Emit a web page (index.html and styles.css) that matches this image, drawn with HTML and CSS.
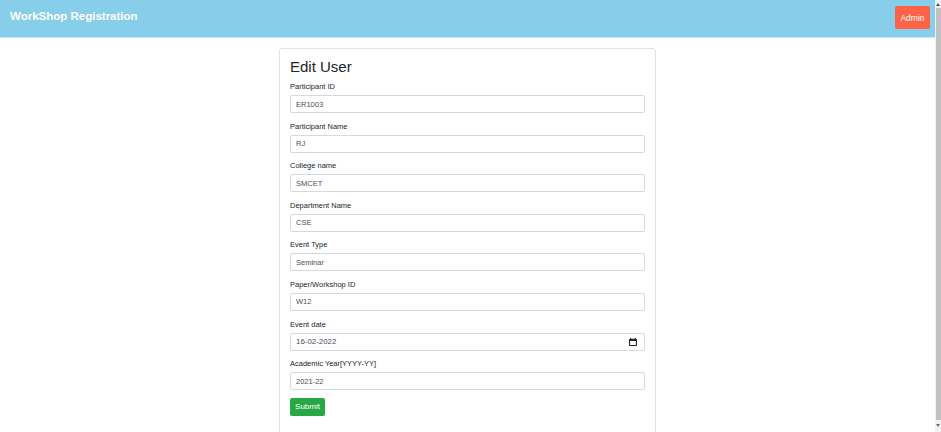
FILE: index.html
```html
<!DOCTYPE html>
<html lang="en">
<head>
    <meta charset="UTF-8">
    <title>WorkShop Registration</title>
    <link rel="stylesheet" href="styles.css">
</head>
<body>
    <div class="page">
        <header class="header">
            <div class="logo">WorkShop Registration</div>
            <button class="admin-button">Admin</button>
        </header>

        <div class="container">
            <form class="card">
                <h2>Edit User</h2>
                <div class="input-group">
                    <label>Participant ID</label>
                    <input type="text" value="ER1003">
                </div>
                <div class="input-group">
                    <label>Participant Name</label>
                    <input type="text" value="RJ">
                </div>
                <div class="input-group">
                    <label>College name</label>
                    <input type="text" value="SMCET">
                </div>
                <div class="input-group">
                    <label>Department Name</label>
                    <input type="text" value="CSE">
                </div>
                <div class="input-group">
                    <label>Event Type</label>
                    <input type="text" value="Seminar">
                </div>
                <div class="input-group">
                    <label>Paper/Workshop ID</label>
                    <input type="text" value="W12">
                </div>
                <div class="input-group">
                    <label>Event date</label>
                    <div class="date-field">
                        <span class="date-value">16-02-2022</span>
                        <svg class="calendar-icon" width="8" height="8" viewBox="0 0 10 10">
                            <path d="M2 0v2M8 0v2" stroke="#222" stroke-width="1.2" fill="none"/>
                            <rect x="0.7" y="1.5" width="8.6" height="8" rx="0.6" fill="none" stroke="#222" stroke-width="1.3"/>
                            <rect x="0.7" y="1.5" width="8.6" height="2.2" fill="#222"/>
                        </svg>
                    </div>
                </div>
                <div class="input-group">
                    <label>Academic Year[YYYY-YY]</label>
                    <input type="text" value="2021-22">
                </div>
                <button type="button" class="submit-button">Submit</button>
            </form>
        </div>
    </div>

    <div class="scrollbar">
        <div class="scroll-arrow"></div>
        <div class="scroll-thumb"></div>
        <div class="scroll-arrow down"></div>
    </div>
</body>
</html>
```

FILE: styles.css
```css
html, body {
    height: 100%;
}

body {
    font-family: "Liberation Sans", Arial, sans-serif;
    margin: 0;
    padding: 0;
    background-color: white;
    color: #212529;
    display: flex;
    overflow: hidden;
}

.page {
    flex: 1;
    min-width: 0;
    height: 432px;
    overflow: hidden;
}

.header {
    background-color: #87ceeb;
    height: 38px;
    border-bottom: 1px solid #c4e8f6;
    padding: 5px 5px 4px 10px;
    box-sizing: border-box;
    display: flex;
    align-items: flex-start;
    justify-content: space-between;
}

.logo {
    color: white;
    font-size: 11.5px;
    font-weight: bold;
    line-height: 22px;
}

.admin-button {
    background-color: #ff6347;
    color: white;
    border: none;
    border-radius: 2px;
    width: 35px;
    height: 23px;
    padding: 0;
    margin-top: 1px;
    font-family: inherit;
    font-size: 8.5px;
}

.container {
    display: flex;
    justify-content: center;
    padding-top: 10px;
}

.card {
    width: 377px;
    height: 400px;
    box-sizing: border-box;
    border: 1px solid #e2e2e2;
    border-radius: 3px;
    padding: 9px 10px;
}

.card h2 {
    margin: 0 0 5px;
    font-size: 15px;
    font-weight: normal;
    line-height: 18px;
    color: #212529;
}

.input-group {
    margin-bottom: 7.6px;
}

.input-group label {
    display: block;
    font-size: 7.5px;
    line-height: 11px;
    margin-bottom: 3px;
    color: #212529;
}

.input-group input,
.date-field {
    display: flex;
    align-items: center;
    justify-content: space-between;
    width: 100%;
    height: 18px;
    box-sizing: border-box;
    padding: 0 5px;
    border: 1px solid #d5dae0;
    border-radius: 2px;
    font-family: inherit;
    font-size: 7.5px;
    color: #495057;
    background: white;
}

.date-value {
    font-size: 7.9px;
}

.calendar-icon {
    margin-right: 2px;
}

.submit-button {
    display: block;
    background-color: #28a745;
    color: white;
    border: none;
    border-radius: 2px;
    width: 35px;
    height: 18px;
    padding: 0;
    font-family: inherit;
    font-size: 8px;
}

.scrollbar {
    width: 6px;
    height: 432px;
    background-color: #f1f1f1;
    flex-shrink: 0;
}

.scroll-arrow {
    width: 0;
    height: 0;
    margin: 3px auto 2px;
    border-left: 2px solid transparent;
    border-right: 2px solid transparent;
    border-bottom: 3px solid #505050;
}

.scroll-arrow.down {
    margin: 4px auto 0;
    border-bottom: none;
    border-top: 3px solid #707070;
}

.scroll-thumb {
    height: 412px;
    margin-left: 1px;
    background-color: #c1c1c1;
}
```
